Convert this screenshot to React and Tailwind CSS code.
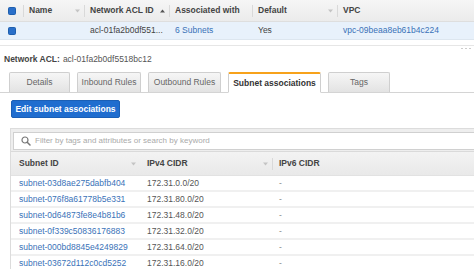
import React from "react";

function Arrow({ up, dark }) {
  return (
    <svg width="5" height="4" viewBox="0 0 5 4" className="shrink-0">
      {up ? (
        <path d="M0 3.5 L2.5 0.5 L5 3.5 Z" fill={dark ? "#555" : "#bbb"} />
      ) : (
        <path d="M0 0.5 L2.5 3.5 L5 0.5 Z" fill={dark ? "#555" : "#c4c4c4"} />
      )}
    </svg>
  );
}

function Sep() {
  return <span className="w-px h-[12px] bg-[#d9d9d9] shrink-0" />;
}

function Check() {
  return <span className="w-[8px] h-[8px] rounded-[1.5px] bg-[#2a6fc9] border border-[#1f5fae] block" />;
}

function HCell({ w, label, arrow, up }) {
  return (
    <div className={"flex items-center h-full " + (w ? "" : "flex-1")} style={w ? { width: w } : undefined}>
      <Sep />
      <span className="pl-[5px]">{label}</span>
      {arrow && (
        <span className="ml-auto mr-[4px] flex items-center">
          <Arrow up={up} dark={up} />
        </span>
      )}
    </div>
  );
}

const subnets = [
  ["subnet-03d8ae275dabfb404", "172.31.0.0/20"],
  ["subnet-076f8a61778b5e331", "172.31.80.0/20"],
  ["subnet-0d64873fe8e4b81b6", "172.31.48.0/20"],
  ["subnet-0f339c50836176883", "172.31.32.0/20"],
  ["subnet-000bd8845e4249829", "172.31.64.0/20"],
  ["subnet-03672d112c0cd5252", "172.31.16.0/20"],
];

function Tab({ label, w, active }) {
  return (
    <div
      className={
        "flex items-center justify-center border border-[#cfcfcf] rounded-t-[2px] " +
        (active
          ? "bg-white border-b-white border-t-2 border-t-[#f7a21b] font-bold text-[#333] mb-[-1px] h-[21px]"
          : "h-[20px] bg-gradient-to-b from-[#f6f6f6] to-[#e3e3e3] text-[#666] border-b-0")
      }
      style={{ width: w }}
    >
      {label}
    </div>
  );
}

export default function App() {
  return (
    <div className="w-[474px] h-[269px] overflow-hidden bg-white font-['Liberation_Sans',Arial,sans-serif] text-[8.5px] text-[#444] flex flex-col">
      {/* Top table header */}
      <div className="flex h-[22px] shrink-0 items-center bg-gradient-to-b from-[#f6f6f6] to-[#ebebeb] border-b border-[#dedede] font-bold text-[#444]">
        <div className="w-[23px] flex justify-center pl-[1px]">
          <Check />
        </div>
        <HCell w={61} label="Name" arrow />
        <HCell w={85} label="Network ACL ID" arrow up />
        <HCell w={83} label="Associated with" />
        <HCell w={85} label="Default" arrow />
        <HCell label="VPC" />
      </div>
      {/* Selected row */}
      <div className="flex h-[18px] shrink-0 items-center bg-[#e8f1fb] border-b border-[#dde6ef]">
        <div className="w-[23px] flex justify-center pl-[1px]">
          <Check />
        </div>
        <div className="w-[61px]" />
        <div className="w-[85px] pl-[6px] text-[#444]">acl-01fa2b0df551...</div>
        <div className="w-[83px] pl-[6px] text-[#3a72b8]">6 Subnets</div>
        <div className="w-[85px] pl-[6px] text-[#444]">Yes</div>
        <div className="flex-1 pl-[6px] text-[#3a72b8]">vpc-09beaa8eb61b4c224</div>
      </div>
      {/* Splitter */}
      <div className="mt-[5px] h-px bg-[#e6e6e6] shrink-0" />
      <div className="flex justify-end pr-[3px] h-[4px] shrink-0">
        <div className="flex gap-[2px] mt-[2px]">
          <span className="w-[2px] h-[1px] bg-[#ccc]" />
          <span className="w-[2px] h-[1px] bg-[#ccc]" />
          <span className="w-[2px] h-[1px] bg-[#ccc]" />
        </div>
      </div>
      {/* Info line */}
      <div className="mt-[3px] h-[12px] shrink-0 flex items-center pl-[4px]">
        <span className="font-bold text-[#444]">Network ACL:</span>
        <span className="ml-[3px] text-[#555]">acl-01fa2b0df5518bc12</span>
      </div>
      {/* Tabs */}
      <div className="mt-[8px] h-[20px] shrink-0 flex items-end gap-[7px] pl-[9px] border-b border-[#d4d4d4]">
        <Tab label="Details" w={61} />
        <Tab label="Inbound Rules" w={64} />
        <Tab label="Outbound Rules" w={73} />
        <Tab label="Subnet associations" w={93} active />
        <Tab label="Tags" w={62} />
      </div>
      {/* Button */}
      <div className="mt-[7px] pl-[11px] shrink-0">
        <button className="w-[109px] h-[18px] rounded-[2px] bg-[#1f6dcf] border border-[#1a5fb6] text-white font-bold text-[8.5px] flex items-center justify-center">
          Edit subnet associations
        </button>
      </div>
      {/* Panel */}
      <div className="mt-[10px] ml-[10px] flex-1 border-l border-t border-[#dcdcdc] bg-[#eeeeee] pt-[3px] flex flex-col">
        <div className="ml-[2px] h-[18px] shrink-0 bg-white border border-r-0 border-[#d0d0d0] flex items-center">
          <svg width="10" height="10" viewBox="0 0 10 10" className="ml-[7px]">
            <circle cx="4" cy="4" r="3" fill="none" stroke="#777" strokeWidth="1.2" />
            <path d="M6.2 6.2 L9 9" stroke="#777" strokeWidth="1.5" strokeLinecap="round" />
          </svg>
          <span className="ml-[4px] text-[8px] text-[#aaa]">Filter by tags and attributes or search by keyword</span>
        </div>
        <div className="mt-[1px] h-[25px] shrink-0 flex items-center bg-gradient-to-b from-[#f3f3f3] to-[#e9e9e9] border-t border-[#dadada] border-b border-b-[#e2e2e2] font-bold text-[#444]">
          <div className="w-[130px] flex items-center pl-[8px]">
            <span>Subnet ID</span>
            <span className="ml-auto mr-[5px] flex">
              <Arrow />
            </span>
          </div>
          <div className="w-[131px] flex items-center pl-[6px]">
            <span>IPv4 CIDR</span>
            <span className="ml-auto mr-[4px] flex">
              <Arrow />
            </span>
          </div>
          <div className="flex-1 flex items-center h-full">
            <Sep />
            <span className="pl-[6px]">IPv6 CIDR</span>
          </div>
        </div>
        <div className="flex-1 bg-white flex flex-col">
          {subnets.map(([id, cidr]) => (
            <div key={id} className="h-[16px] shrink-0 flex items-center border-b-2 border-[#f0f0f0]">
              <div className="w-[130px] pl-[8px] text-[#3a72b8]">{id}</div>
              <div className="w-[131px] pl-[6px] text-[#555]">{cidr}</div>
              <div className="flex-1 pl-[7px] text-[#888]">-</div>
            </div>
          ))}
        </div>
      </div>
    </div>
  );
}
